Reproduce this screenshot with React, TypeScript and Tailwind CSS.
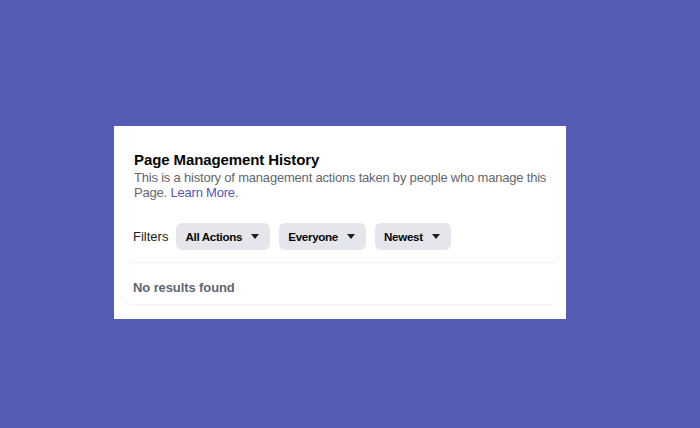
import React from "react";

function Caret() {
  return (
    <svg width="8" height="5" viewBox="0 0 8 5" className="ml-[9px]">
      <path d="M0 0 L8 0 L4 5 Z" fill="#1c1e21" />
    </svg>
  );
}

function FilterButton({ label }: { label: string }) {
  return (
    <div className="flex h-[27px] items-center rounded-[6px] bg-[#e4e6eb] pl-[9px] pr-[11px] text-[11.6px] font-bold tracking-[-0.3px] text-[#050505]">
      <span>{label}</span>
      <Caret />
    </div>
  );
}

export default function App() {
  return (
    <div
      className="h-[428px] w-[700px] overflow-hidden bg-[#545db3] pt-[126px] pl-[114px]"
      style={{ fontFamily: '"Liberation Sans", Arial, sans-serif' }}
    >
      <div className="h-[193px] w-[452px] bg-white pl-[9px] pr-[8px] pt-[11px]">
        <div className="rounded-[8px] pl-[10px] pr-[4px] pb-[12px] pt-[14px] shadow-[0_1px_2px_rgba(0,0,0,0.06)]">
          <div className="pl-[1px] text-[15px] font-bold leading-[18px] tracking-[-0.1px] text-[#050505]">
            Page Management History
          </div>
          <div className="mt-[1px] pl-[1px] text-[13px] leading-[15px] tracking-[-0.2px] text-[#65676b]">
            This is a history of management actions taken by people who manage this Page.{" "}
            <span className="text-[#5357b8]">Learn More</span>.
          </div>
          <div className="mt-[23px] flex items-center gap-[9px]">
            <span className="mr-[-1px] text-[13px] text-[#1c1e21]">Filters</span>
            <FilterButton label="All Actions" />
            <FilterButton label="Everyone" />
            <FilterButton label="Newest" />
          </div>
        </div>
        <div className="mt-[10px] flex h-[32px] items-center rounded-[8px] px-[10px] shadow-[0_1px_2px_rgba(0,0,0,0.06)]">
          <span className="text-[13px] font-bold tracking-[-0.1px] text-[#606770]">No results found</span>
        </div>
      </div>
    </div>
  );
}
